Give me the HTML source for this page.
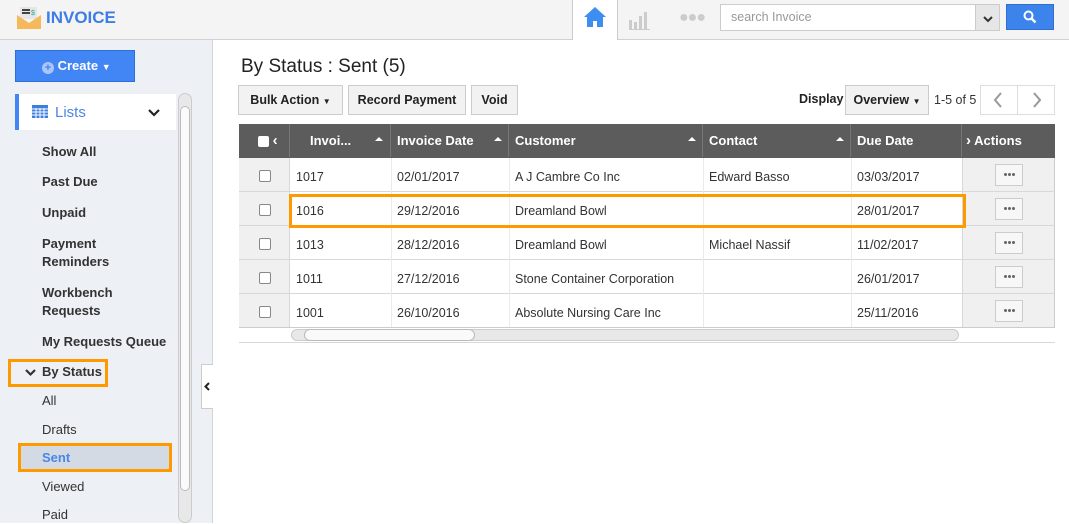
<!DOCTYPE html>
<html><head><style>
*{box-sizing:border-box;margin:0;padding:0}
body{width:1069px;height:523px;overflow:hidden;font-family:"Liberation Sans",sans-serif;background:#fff;position:relative;font-size:13px;color:#333}
.a{position:absolute}
.hdr{left:0;top:0;width:1069px;height:40px;background:#f4f4f4;border-bottom:1px solid #d0d0d0}
.side{left:0;top:40px;width:213px;height:483px;background:#edf0f4;border-right:1px solid #d4d4d4}
.si{position:absolute;left:42px;font-weight:bold;font-size:13px;color:#333;line-height:18px}
.btn{position:absolute;top:85px;height:30px;background:#f2f2f2;border:1px solid #ccc;font-weight:bold;font-size:12.5px;line-height:28px;text-align:center;color:#222}
.th{position:absolute;top:124px;height:33px;color:#fff;font-weight:bold;line-height:33px;font-size:13px;padding-left:6px;border-right:1px solid #777}
.row{position:absolute;left:239px;width:816px;height:34px;border-bottom:1px solid #d8d8d8}
.c{position:absolute;top:2px;line-height:34px;font-size:12.5px;color:#333}
.cb{position:absolute;left:20px;top:12px;width:12px;height:12px;border:1px solid #888;border-radius:2px;background:#fff}
.dots{position:absolute;left:32px;top:6px;width:28px;height:22px;border:1px solid #ccc;background:#f7f7f7}
.dots:after{content:"";position:absolute;left:8px;top:8px;width:3px;height:3px;border-radius:2px;background:#666;box-shadow:4px 0 #666,8px 0 #666}
.arr{position:absolute;width:0;height:0;border-left:4px solid transparent;border-right:4px solid transparent;border-bottom:4px solid #fff;top:14px}
</style></head><body>
<div class="a hdr"></div>
<svg class="a" style="left:16px;top:6px" width="26" height="24" viewBox="0 0 26 24"><rect x="4" y="1" width="17" height="12" fill="#e6e6e6"/><rect x="6" y="3" width="8" height="2" fill="#444"/><rect x="6" y="6" width="8" height="2" fill="#444"/><text x="15" y="9" font-size="7" fill="#2a8">$</text><path d="M1 9 L13 17 L25 9 V23 H1Z" fill="#f5b85a"/></svg>
<div class="a" style="left:46px;top:8px;color:#3c7de6;font-weight:bold;font-size:17px">INVOICE</div>
<div class="a" style="left:572px;top:0;width:46px;height:40px;background:#fff;border-left:1px solid #ccc;border-right:1px solid #ccc"></div>
<svg class="a" style="left:583px;top:6px" width="24" height="22" viewBox="0 0 24 22"><path d="M12 1 L1 11 H4 V21 H10 V15 H14 V21 H20 V11 H23Z" fill="#3d8ef0"/></svg>
<svg class="a" style="left:629px;top:9px" width="22" height="21"><rect x="0" y="11" width="3" height="9" fill="#ccc"/><rect x="5" y="13" width="3" height="7" fill="#ccc"/><rect x="10" y="7" width="3" height="13" fill="#ccc"/><rect x="15" y="3" width="3" height="17" fill="#ccc"/><rect x="0" y="20" width="21" height="1" fill="#ccc"/></svg>
<div class="a" style="left:679px;top:9px;color:#ccc;font-size:16px;letter-spacing:-1px">●●●</div>
<div class="a" style="left:720px;top:4px;width:256px;height:27px;background:#fff;border:1px solid #ccc;color:#999;font-size:12.5px;line-height:25px;padding-left:10px">search Invoice</div>
<div class="a" style="left:975px;top:4px;width:25px;height:27px;background:#e6e6e6;border:1px solid #ccc"></div>
<svg class="a" style="left:983px;top:16px" width="10" height="7"><path d="M1 1 L5 5 L9 1" stroke="#333" stroke-width="2" fill="none"/></svg>
<div class="a" style="left:1006px;top:4px;width:48px;height:26px;background:#3c84ec;border:1px solid #2f6fd0"></div>
<svg class="a" style="left:1023px;top:10px" width="14" height="14"><circle cx="5.5" cy="5.5" r="4" stroke="#fff" stroke-width="2" fill="none"/><path d="M8.5 8.5 L12.5 12.5" stroke="#fff" stroke-width="2.5"/></svg>

<div class="a side"></div>
<div class="a" style="left:15px;top:50px;width:120px;height:32px;background:#4285f4;border:1px solid #2d6fd8;color:#fff;font-weight:bold;line-height:30px;font-size:13px;padding-left:26px"><span style="display:inline-block;width:12px;height:12px;border-radius:6px;background:#a9c6f7;color:#4285f4;font-size:11px;line-height:12px;text-align:center;vertical-align:-1px">+</span> Create <span style="font-size:9px">▼</span></div>
<div class="a" style="left:15px;top:94px;width:161px;height:36px;background:#fff;border-left:4px solid #4285f4"></div>
<svg class="a" style="left:32px;top:105px" width="16" height="13"><rect width="16" height="13" fill="#3d7de0"/><path d="M0 4H16M0 7H16M0 10H16M4 3V13M8 3V13M12 3V13" stroke="#fff" stroke-width="1"/></svg>
<div class="a" style="left:55px;top:104px;color:#4a86e8;font-size:15px">Lists</div>
<svg class="a" style="left:148px;top:109px" width="12" height="8"><path d="M1 1 L6 6 L11 1" stroke="#222" stroke-width="2.2" fill="none"/></svg>
<div class="a" style="left:178px;top:93px;width:14px;height:430px;background:#e8e8e8;border:1px solid #ccc;border-radius:7px"></div>
<div class="a" style="left:180px;top:106px;width:10px;height:385px;background:#fafafa;border:1px solid #bbb;border-radius:5px"></div>
<div class="si" style="top:143px">Show All</div>
<div class="si" style="top:173px">Past Due</div>
<div class="si" style="top:204px">Unpaid</div>
<div class="si" style="top:235px">Payment<br>Reminders</div>
<div class="si" style="top:284px">Workbench<br>Requests</div>
<div class="si" style="top:333px">My Requests Queue</div>
<div class="a" style="left:8px;top:359px;width:100px;height:28px;border:3px solid #f90"></div>
<svg class="a" style="left:25px;top:369px" width="11" height="8"><path d="M1 1 L5.5 5.5 L10 1" stroke="#333" stroke-width="2.2" fill="none"/></svg>
<div class="si" style="top:363px">By Status</div>
<div class="si" style="top:392px;font-weight:normal">All</div>
<div class="si" style="top:421px;font-weight:normal">Drafts</div>
<div class="a" style="left:18px;top:443px;width:154px;height:29px;border:3px solid #f90;background:#d4dae3"></div>
<div class="si" style="top:449px;color:#4a86e8">Sent</div>
<div class="si" style="top:478px;font-weight:normal">Viewed</div>
<div class="si" style="top:506px;font-weight:normal">Paid</div>
<div class="a" style="left:201px;top:364px;width:12px;height:45px;background:#fff;border:1px solid #ccc;border-right:none"></div>
<svg class="a" style="left:204px;top:382px" width="6" height="9"><path d="M5 1 L1.5 4.5 L5 8" stroke="#222" stroke-width="2" fill="none"/></svg>

<div class="a" style="left:241px;top:56px;font-size:19px;color:#222">By Status : Sent (5)</div>
<div class="btn" style="left:238px;width:105px">Bulk Action <span style="font-size:8px">▼</span></div>
<div class="btn" style="left:348px;width:118px">Record Payment</div>
<div class="btn" style="left:471px;width:47px">Void</div>
<div class="a" style="left:799px;top:92px;font-weight:bold;font-size:12.5px;color:#222">Display</div>
<div class="btn" style="left:845px;width:84px">Overview <span style="font-size:8px">▼</span></div>
<div class="a" style="left:934px;top:93px;font-size:12.5px;color:#333">1-5 of 5</div>
<div class="a" style="left:980px;top:85px;width:75px;height:30px;border:1px solid #ddd;background:#fff"></div>
<div class="a" style="left:1017px;top:85px;width:1px;height:30px;background:#ddd"></div>
<svg class="a" style="left:993px;top:92px" width="10" height="16"><path d="M8 1 L2 8 L8 15" stroke="#999" stroke-width="2" fill="none"/></svg>
<svg class="a" style="left:1032px;top:92px" width="10" height="16"><path d="M2 1 L8 8 L2 15" stroke="#999" stroke-width="2" fill="none"/></svg>

<div class="a" style="left:239px;top:124px;width:816px;height:34px;background:#5c5c5c"></div>
<div class="th" style="left:239px;width:51px"><span style="display:inline-block;width:11px;height:11px;background:#fff;border-radius:2px;margin-left:13px;vertical-align:-2px"></span> <b style="font-size:15px">‹</b></div>
<div class="th" style="left:290px;width:101px;padding-left:20px">Invoi...</div><div class="arr" style="left:375px;top:137px"></div>
<div class="th" style="left:391px;width:118px">Invoice Date</div><div class="arr" style="left:494px;top:137px"></div>
<div class="th" style="left:509px;width:194px">Customer</div><div class="arr" style="left:688px;top:137px"></div>
<div class="th" style="left:703px;width:148px">Contact</div><div class="arr" style="left:836px;top:137px"></div>
<div class="th" style="left:851px;width:111px">Due Date</div>
<div class="th" style="left:962px;width:93px;border-right:none;padding-left:4px"><b style="font-size:15px">›</b> Actions</div>

<div class="a" style="left:239px;top:158px;width:51px;height:170px;background:#f0f0f0;border-right:1px solid #d8d8d8"></div>
<div class="a" style="left:962px;top:158px;width:93px;height:170px;background:#f0f0f0;border-left:1px solid #d8d8d8;border-right:1px solid #ccc"></div>

<div class="row" style="top:158px"><div class="cb"></div><div class="c" style="left:57px">1017</div><div class="c" style="left:158px">02/01/2017</div><div class="c" style="left:276px">A J Cambre Co Inc</div><div class="c" style="left:470px">Edward Basso</div><div class="c" style="left:618px">03/03/2017</div><div class="dots" style="left:756px"></div></div>
<div class="row" style="top:192px"><div class="cb"></div><div class="c" style="left:57px">1016</div><div class="c" style="left:158px">29/12/2016</div><div class="c" style="left:276px">Dreamland Bowl</div><div class="c" style="left:618px">28/01/2017</div><div class="dots" style="left:756px"></div></div>
<div class="row" style="top:226px"><div class="cb"></div><div class="c" style="left:57px">1013</div><div class="c" style="left:158px">28/12/2016</div><div class="c" style="left:276px">Dreamland Bowl</div><div class="c" style="left:470px">Michael Nassif</div><div class="c" style="left:618px">11/02/2017</div><div class="dots" style="left:756px"></div></div>
<div class="row" style="top:260px"><div class="cb"></div><div class="c" style="left:57px">1011</div><div class="c" style="left:158px">27/12/2016</div><div class="c" style="left:276px">Stone Container Corporation</div><div class="c" style="left:618px">26/01/2017</div><div class="dots" style="left:756px"></div></div>
<div class="row" style="top:294px;border-bottom:none"><div class="cb"></div><div class="c" style="left:57px">1001</div><div class="c" style="left:158px">26/10/2016</div><div class="c" style="left:276px">Absolute Nursing Care Inc</div><div class="c" style="left:618px">25/11/2016</div><div class="dots" style="left:756px"></div></div>
<div class="a" style="left:391px;top:158px;width:1px;height:170px;background:#eaeaea"></div>
<div class="a" style="left:509px;top:158px;width:1px;height:170px;background:#eaeaea"></div>
<div class="a" style="left:703px;top:158px;width:1px;height:170px;background:#eaeaea"></div>
<div class="a" style="left:851px;top:158px;width:1px;height:170px;background:#eaeaea"></div>
<div class="a" style="left:239px;top:327px;width:816px;height:1px;background:#ccc"></div>
<div class="a" style="left:291px;top:329px;width:668px;height:12px;background:#e8e8e8;border:1px solid #ccc;border-radius:6px"></div>
<div class="a" style="left:304px;top:329px;width:171px;height:12px;background:#fafafa;border:1px solid #bbb;border-radius:6px"></div>
<div class="a" style="left:239px;top:342px;width:816px;height:1px;background:#d8d8d8"></div>
<div class="a" style="left:289px;top:194px;width:677px;height:34px;border:3px solid #f90"></div>
</body></html>
